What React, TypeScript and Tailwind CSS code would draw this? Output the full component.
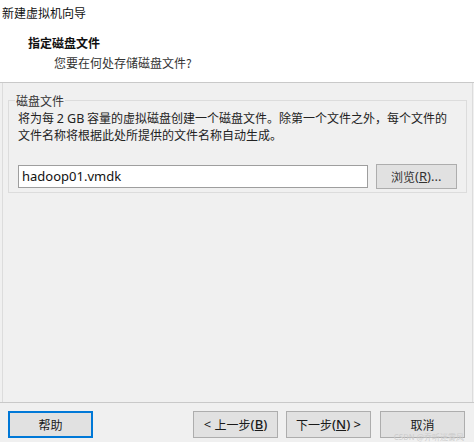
const cjk = { fontFamily: "'Noto Sans CJK SC', 'Noto Sans', sans-serif" };
const latin = { fontFamily: "'Noto Sans', 'Noto Sans CJK SC', sans-serif" };

function WizButton({
  children,
  focused = false,
  className = "",
}: {
  children: React.ReactNode;
  focused?: boolean;
  className?: string;
}) {
  return (
    <button
      type="button"
      className={[
        "h-[27px] w-[85px] flex items-center justify-center bg-[#e1e1e1] text-[12px] text-[#1a1a1a] leading-none whitespace-nowrap",
        focused ? "border-2 border-[#0078d7]" : "border border-[#adadad]",
        className,
      ].join(" ")}
      style={cjk}
    >
      {children}
    </button>
  );
}

export default function App() {
  return (
    <div className="w-[474px] h-[442px] bg-[#f0f0f0] flex flex-col overflow-hidden relative" style={cjk}>
      {/* header */}
      <div className="h-[83px] bg-white shrink-0 border-b border-[#c9c9c9]">
        <div className="pl-[2px] pt-[4px] text-[12px] leading-[17px] text-[#111]">新建虚拟机向导</div>
        <div className="pl-[28px] pt-[13px] text-[12px] leading-[17px] font-bold text-[#111]">指定磁盘文件</div>
        <div className="pl-[54px] pt-[3px] text-[12px] leading-[17px] text-[#333]">您要在何处存储磁盘文件?</div>
      </div>

      {/* body */}
      <div className="flex-1 border-l border-r border-[#dcdcdc] ml-[2px] mr-[1px] px-[5px] pt-[17px]">
        <div className="relative border border-[#dcdcdc] h-[93px] px-[9px] pt-[9px]">
          <span className="absolute -top-[9px] left-[6px] bg-[#f0f0f0] px-[1px] text-[12px] leading-[17px] text-[#333]">
            磁盘文件
          </span>
          <p className="text-[12px] leading-[16px] text-[#222] whitespace-nowrap">
            将为每 <span style={latin} className="text-[12.5px]">2 GB</span> 容量的虚拟磁盘创建一个磁盘文件。除第一个文件之外，每个文件的
            <br />
            文件名称将根据此处所提供的文件名称自动生成。
          </p>
          <div className="flex items-center gap-[8px] mt-[21px]">
            <div
              className="w-[352px] h-[23px] bg-white border border-[#9e9e9e] flex items-center px-[3px] text-[13px] text-[#111]"
              style={latin}
            >
              hadoop01.vmdk
            </div>
            <button
              type="button"
              className="h-[25px] w-[82px] bg-[#e1e1e1] border border-[#adadad] flex items-center justify-center text-[12px] text-[#333] whitespace-nowrap"
              style={cjk}
            >
              浏览<span style={latin} className="text-[13px]">(<u>R</u>)...</span>
            </button>
          </div>
        </div>
      </div>

      {/* footer */}
      <div className="h-[40px] shrink-0 border-t border-[#c9c9c9] flex items-start pt-[8px] pl-[8px] pr-[9px]">
        <WizButton focused>帮助</WizButton>
        <div className="flex-1" />
        <WizButton>
          <span style={latin} className="text-[13px]">&lt;&nbsp;</span>上一步
          <span style={latin} className="text-[13px] font-medium">(<u>B</u>)</span>
        </WizButton>
        <WizButton className="ml-[8px]">
          下一步<span style={latin} className="text-[13px] font-medium">(<u>N</u>)&nbsp;&gt;</span>
        </WizButton>
        <WizButton className="ml-[9px]">取消</WizButton>
      </div>

      <span className="absolute right-[10px] bottom-0 text-[8px] leading-[10px] text-[#cdcdcd]">CSDN @乔听迷雾风</span>
    </div>
  );
}
